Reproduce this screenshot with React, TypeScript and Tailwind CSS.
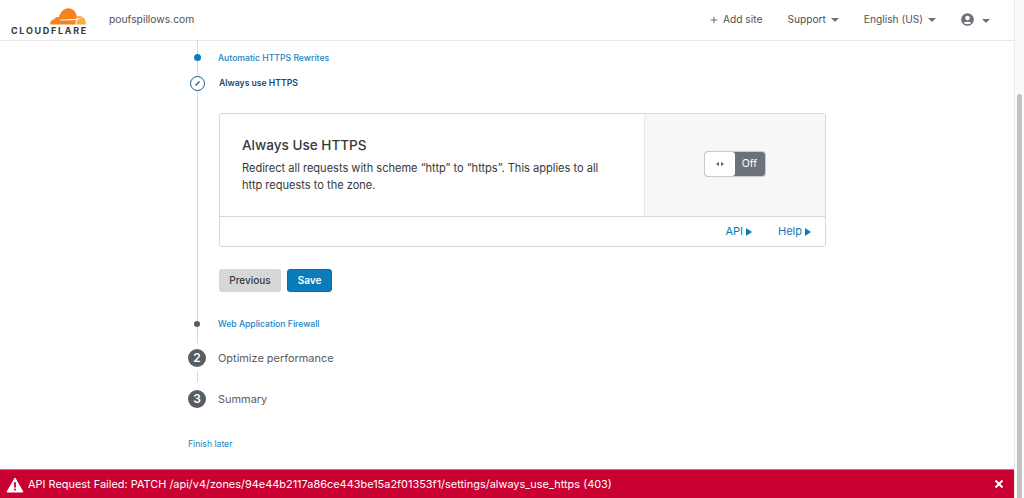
import React from 'react';
import { Plus } from 'lucide-react';

const Caret = () => <span className="ml-[5px] inline-block h-0 w-0 border-x-[4px] border-t-[4px] border-x-transparent border-t-[#6d7278]" />;

const Cloud = () => (
  <svg width="36" height="17" viewBox="0 0 36 17" className="block">
    <path d="M0.3 16.6 C-0.2 13.6 1.6 11.4 4.2 11.6 C4.6 9.4 7 8.4 8.8 9.4 C10.6 3 15 0 18.6 0.2 C23 0.4 26 3.6 26.8 8.2 C27 11 26.6 14 25.6 16.6 Z" fill="#f6821f" />
    <path d="M26 16.6 C26.6 13.6 27.2 10.4 27 8.4 C31 6.6 35.4 10 35.4 13.6 C35.8 14.6 36 15.6 36 16.6 Z" fill="#fbad41" />
    <path d="M10 12.6 L24 12.2 L33 10.2 L24 10.9 L10 11.8 Z" fill="#ffffff" />
    <path d="M25.4 16.6 L27.4 10" stroke="#ffffff" strokeWidth="0.8" />
  </svg>
);

const Account = () => (
  <svg width="13" height="13" viewBox="0 0 14 14" className="block">
    <circle cx="7" cy="7" r="6.8" fill="#6d7278" />
    <circle cx="7" cy="5.4" r="2.5" fill="#ffffff" />
    <path d="M2.9 10.9 C4 8.9 10 8.9 11.1 10.9 C9.5 12.5 4.5 12.5 2.9 10.9 Z" fill="#ffffff" />
  </svg>
);

const Warning = () => (
  <svg width="18" height="16" viewBox="0 0 18 16" className="block">
    <path d="M9 1 L17 15 L1 15 Z" fill="#ffffff" stroke="#ffffff" strokeLinejoin="round" />
    <rect x="8.1" y="5.2" width="1.8" height="5.4" fill="#c90032" />
    <rect x="8.1" y="11.6" width="1.8" height="1.8" fill="#c90032" />
  </svg>
);

const Header = () => (
  <header className="flex h-[41px] shrink-0 items-center border-b border-[#e6e8e9] bg-white pl-[11px] pr-[24px] text-[#4e5256]">
    <div className="flex w-[76px] flex-col items-end pt-[3px]">
      <div className="mr-[1px]"><Cloud /></div>
      <span className="mt-[1px] self-start text-[9px] leading-[10px] font-bold tracking-[1.7px] whitespace-nowrap text-[#36393a]">CLOUDFLARE</span>
    </div>
    <span className="ml-[22px] text-[10.3px]">poufspillows.com</span>
    <nav className="ml-auto flex items-center text-[10.2px]">
      <span className="flex items-center">
        <Plus size={10} strokeWidth={2} className="mr-[4px]" />
        Add site
      </span>
      <span className="ml-[25px] flex items-center">Support<Caret /></span>
      <span className="ml-[25px] flex items-center">English (US)<Caret /></span>
      <span className="ml-[25px] flex items-center"><Account /><span className="ml-[3px]"><Caret /></span></span>
    </nav>
  </header>
);

const Row = ({ rail, children, className }: { rail: React.ReactNode; children: React.ReactNode; className: string }) => (
  <div className={`flex ${className}`}>
    <div className="flex w-[18px] shrink-0 flex-col items-center">{rail}</div>
    {children}
  </div>
);

const Line = ({ className = 'flex-1' }: { className?: string }) => <div className={`w-px bg-[#d5d7d8] ${className}`} />;

const Number = ({ n }: { n: number }) => (
  <div className="flex h-[18px] w-[18px] shrink-0 items-center justify-center rounded-full bg-[#595d61] text-[12px] font-semibold text-white">{n}</div>
);

const Card = () => (
  <div className="w-[607px] overflow-hidden rounded-[3px] border border-[#d5d7d8] bg-white">
    <div className="flex h-[103px] border-b border-[#d5d7d8]">
      <div className="w-[424px] pl-[22px] pt-[22px] text-[#36393a]">
        <h2 className="text-[13.55px] leading-[18px] font-medium">Always Use HTTPS</h2>
        <p className="mt-[6px] text-[11.05px] leading-[17px]">
          Redirect all requests with scheme “http” to “https”. This applies to all
          <br />
          http requests to the zone.
        </p>
      </div>
      <div className="flex flex-1 items-center justify-center border-l border-[#e6e8e9] bg-[#f7f7f8]">
        <div className="mb-[2px] mr-[1px] flex h-[26px] w-[62px] overflow-hidden rounded-[4px] border border-[#c9cbcd] bg-[#6d7278]">
          <div className="flex w-[30px] items-center justify-center gap-[2px] rounded-r-[3px] bg-white">
            <span className="h-0 w-0 border-y-[2.5px] border-r-[3px] border-y-transparent border-r-[#595d61]" />
            <span className="h-0 w-0 border-y-[2.5px] border-l-[3px] border-y-transparent border-l-[#595d61]" />
          </div>
          <span className="flex flex-1 items-center justify-center text-[10.5px] text-white">Off</span>
        </div>
      </div>
    </div>
    <div className="flex h-[29px] items-center justify-end pr-[14px] text-[11px] text-[#0a7cb9]">
      <span className="flex items-center">API<span className="ml-[3px] h-0 w-0 border-y-[4px] border-l-[6px] border-y-transparent border-l-[#0a7cb9]" /></span>
      <span className="ml-[26px] flex items-center">Help<span className="ml-[3px] h-0 w-0 border-y-[4px] border-l-[6px] border-y-transparent border-l-[#0a7cb9]" /></span>
    </div>
  </div>
);

const App = () => (
  <div className="flex h-[498px] w-[1024px] overflow-hidden bg-white font-['Inter',sans-serif]">
    <div className="flex w-[1014px] shrink-0 flex-col">
      <Header />
      <main className="flex flex-1 flex-col pl-[188px]">
        <Row
          className="h-[30px]"
          rail={<><Line className="h-[13px]" /><div className="h-[7px] w-[7px] rounded-full bg-[#0a7cb9]" /><Line /></>}
        >
          <span className="ml-[12px] mt-[11px] text-[8.65px] leading-[12px] font-medium text-[#1a85bf]">Automatic HTTPS Rewrites</span>
        </Row>
        <Row
          className="h-[26px]"
          rail={
            <>
              <Line className="h-[5px]" />
              <div className="flex h-[15px] w-[15px] shrink-0 items-center justify-center rounded-full border border-[#1d5a8a]">
                <svg width="7" height="7" viewBox="0 0 7 7"><path d="M1.5 5.5 L5.5 1.5" stroke="#1d5a8a" strokeWidth="1.3" /></svg>
              </div>
              <Line />
            </>
          }
        >
          <span className="ml-[13px] mt-[6px] text-[8.65px] leading-[12px] font-semibold text-[#0f4a75]">Always use HTTPS</span>
        </Row>
        <Row className="h-[213px]" rail={<Line />}>
          <div className="ml-[13px] pt-[16px]">
            <Card />
            <div className="mt-[22px] flex gap-[6px]">
              <button className="h-[23px] w-[62px] rounded-[3px] bg-[#d5d7d8] text-[10px] font-medium text-[#36393a]">Previous</button>
              <button className="h-[23px] w-[45px] rounded-[3px] border border-[#0a6ca3] bg-[#0a7cb9] text-[10px] font-semibold text-white">Save</button>
            </div>
          </div>
        </Row>
        <Row
          className="h-[33px]"
          rail={<><Line className="h-[11px]" /><div className="h-[6px] w-[6px] rounded-full bg-[#595d61]" /><Line /></>}
        >
          <span className="ml-[12px] mt-[8px] text-[8.65px] leading-[12px] font-medium text-[#1a85bf]">Web Application Firewall</span>
        </Row>
        <Row className="mt-[6px] h-[18px]" rail={<Number n={2} />}>
          <span className="ml-[12px] text-[10.95px] leading-[18px] text-[#595d61]">Optimize performance</span>
        </Row>
        <div className="ml-[8.5px] h-[11px] w-px translate-y-[4px] bg-[#d5d7d8]" />
        <Row className="mt-[12px] h-[18px]" rail={<Number n={3} />}>
          <span className="ml-[12px] text-[10.95px] leading-[18px] text-[#595d61]">Summary</span>
        </Row>
        <span className="mt-[30px] text-[8.65px] leading-[12px] text-[#1a85bf]">Finish later</span>
      </main>
      <div className="flex h-[29px] shrink-0 items-center border-t border-[#dd6677] bg-[#c90032] pl-[6px] pr-[10px] pt-[1px] text-[10.95px] text-white">
        <Warning />
        <span className="ml-[4px]">API Request Failed: PATCH /api/v4/zones/94e44b2117a86ce443be15a2f01353f1/settings/always_use_https (403)</span>
        <svg width="10" height="10" viewBox="0 0 10 10" className="mb-[1px] ml-auto"><path d="M1.5 1.5 L8.5 8.5 M8.5 1.5 L1.5 8.5" stroke="#ffffff" strokeWidth="2" /></svg>
      </div>
    </div>
    <div className="flex w-[10px] shrink-0 flex-col items-center border-l border-[#ececec] bg-[#fafafa] pt-[94px]">
      <div className="w-[5px] flex-1 rounded-t-[3px] bg-[#c1c1c1]" />
    </div>
  </div>
);

export default App;
